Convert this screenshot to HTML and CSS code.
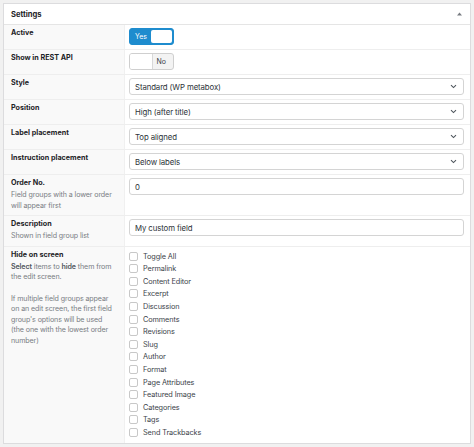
FILE: index.html
```html
<!DOCTYPE html>
<html>
<head>
<meta charset="utf-8">
<link rel="stylesheet" href="styles.css">
</head>
<body>
<div class="panel">
  <div class="panel-head">
    <span class="panel-title">Settings</span>
    <svg class="collapse" width="5" height="4" viewBox="0 0 5 4"><polygon points="2.5,0.5 5,3.5 0,3.5" fill="#787c82"/></svg>
  </div>

  <div class="row">
    <div class="label"><div class="name">Active</div></div>
    <div class="field">
      <div class="toggle on"><span class="t-text">Yes</span><span class="knob"></span></div>
    </div>
  </div>

  <div class="row">
    <div class="label"><div class="name">Show in REST API</div></div>
    <div class="field">
      <div class="toggle off"><span class="knob"></span><span class="t-text">No</span></div>
    </div>
  </div>

  <div class="row">
    <div class="label"><div class="name">Style</div></div>
    <div class="field">
      <div class="input select"><span>Standard (WP metabox)</span><svg class="chev" width="7" height="5" viewBox="0 0 7 5"><path d="M1 1.2 L3.5 3.6 L6 1.2" fill="none" stroke="#50575e" stroke-width="1.1"/></svg></div>
    </div>
  </div>

  <div class="row">
    <div class="label"><div class="name">Position</div></div>
    <div class="field">
      <div class="input select"><span>High (after title)</span><svg class="chev" width="7" height="5" viewBox="0 0 7 5"><path d="M1 1.2 L3.5 3.6 L6 1.2" fill="none" stroke="#50575e" stroke-width="1.1"/></svg></div>
    </div>
  </div>

  <div class="row">
    <div class="label"><div class="name">Label placement</div></div>
    <div class="field">
      <div class="input select"><span>Top aligned</span><svg class="chev" width="7" height="5" viewBox="0 0 7 5"><path d="M1 1.2 L3.5 3.6 L6 1.2" fill="none" stroke="#50575e" stroke-width="1.1"/></svg></div>
    </div>
  </div>

  <div class="row">
    <div class="label"><div class="name">Instruction placement</div></div>
    <div class="field">
      <div class="input select"><span>Below labels</span><svg class="chev" width="7" height="5" viewBox="0 0 7 5"><path d="M1 1.2 L3.5 3.6 L6 1.2" fill="none" stroke="#50575e" stroke-width="1.1"/></svg></div>
    </div>
  </div>

  <div class="row">
    <div class="label">
      <div class="name">Order No.</div>
      <p class="desc">Field groups with a lower order will appear first</p>
    </div>
    <div class="field">
      <div class="input"><span>0</span></div>
    </div>
  </div>

  <div class="row">
    <div class="label">
      <div class="name">Description</div>
      <p class="desc">Shown in field group list</p>
    </div>
    <div class="field">
      <div class="input"><span>My custom field</span></div>
    </div>
  </div>

  <div class="row last">
    <div class="label">
      <div class="name">Hide on screen</div>
      <p class="desc"><b>Select</b> items to <b>hide</b> them from the edit screen.</p>
      <p class="desc gap">If multiple field groups appear on an edit screen, the first field group's options will be used (the one with the lowest order number)</p>
    </div>
    <div class="field">
      <ul class="checks">
        <li><span class="box"></span>Toggle All</li>
        <li><span class="box"></span>Permalink</li>
        <li><span class="box"></span>Content Editor</li>
        <li><span class="box"></span>Excerpt</li>
        <li><span class="box"></span>Discussion</li>
        <li><span class="box"></span>Comments</li>
        <li><span class="box"></span>Revisions</li>
        <li><span class="box"></span>Slug</li>
        <li><span class="box"></span>Author</li>
        <li><span class="box"></span>Format</li>
        <li><span class="box"></span>Page Attributes</li>
        <li><span class="box"></span>Featured Image</li>
        <li><span class="box"></span>Categories</li>
        <li><span class="box"></span>Tags</li>
        <li><span class="box"></span>Send Trackbacks</li>
      </ul>
    </div>
  </div>
</div>
</body>
</html>
```

FILE: styles.css
```css
html, body {
  margin: 0;
  padding: 0;
}
body {
  background: #f1f1f1;
  font-family: Inter, "Noto Sans", "Liberation Sans", sans-serif;
  color: #1d2327;
  padding-top: 3px;
}
.panel {
  margin: 0 3px 0 3px;
  border: 1px solid #dcdcde;
  background: #fff;
}
.panel-head {
  height: 20px;
  border-bottom: 1px solid #e5e5e5;
  display: flex;
  align-items: center;
  justify-content: space-between;
  padding: 0 8px 0 7px;
}
.panel-title {
  font-size: 7.6px;
  font-weight: 700;
  color: #1d2327;
}
.collapse {
  display: block;
}
.row {
  display: grid;
  grid-template-columns: 121px 1fr;
  border-bottom: 1px solid #eeeeee;
}
.row.last {
  border-bottom: none;
}
.label {
  background: #f9f9f9;
  border-right: 1px solid #f0f0f0;
  padding: 2px 9px 4px 7px;
}
.name {
  font-size: 7.2px;
  font-weight: 700;
  line-height: 12px;
  color: #1d2327;
}
.desc {
  margin: 1px 0 0 0;
  font-size: 7.1px;
  letter-spacing: -0.1px;
  line-height: 10.6px;
  color: #787c82;
}
.desc b {
  font-weight: 600;
  color: #50575e;
}
.desc.gap {
  margin-top: 10.6px;
}
.field {
  padding: 3px 6px 4px 4px;
}
.toggle {
  width: 45px;
  height: 17px;
  box-sizing: border-box;
  border-radius: 3px;
  display: flex;
  align-items: center;
  font-size: 7px;
}
.toggle.on {
  background: #1e8cce;
  border: 1px solid #1e8cce;
  justify-content: space-between;
  padding: 1px;
}
.toggle.on .t-text {
  color: #fff;
  padding-left: 4px;
}
.toggle.on .knob {
  width: 21px;
  height: 13px;
  background: #fff;
  border-radius: 2px;
}
.toggle.off {
  background: #f3f3f3;
  border: 1px solid #cfcfcf;
  justify-content: space-between;
}
.toggle.off .knob {
  width: 22px;
  height: 15px;
  background: #fff;
  border-right: 1px solid #d8d8d8;
  border-radius: 2px 0 0 2px;
}
.toggle.off .t-text {
  color: #3c434a;
  padding-right: 7px;
}
.input {
  height: 17px;
  box-sizing: border-box;
  border: 1px solid #d4d4d4;
  border-radius: 3px;
  background: #fff;
  display: flex;
  align-items: center;
  justify-content: space-between;
  padding: 0 6px 0 5px;
  font-size: 7.8px;
  letter-spacing: -0.1px;
  color: #2c3338;
}
.chev {
  display: block;
}
.checks {
  list-style: none;
  margin: 0;
  padding: 0;
}
.checks li {
  display: flex;
  align-items: center;
  height: 12.6px;
  font-size: 7.3px;
  letter-spacing: -0.1px;
  color: #3c434a;
}
.box {
  width: 9px;
  height: 9px;
  box-sizing: border-box;
  border: 1px solid #c8c8c8;
  border-radius: 2px;
  background: #fff;
  margin-right: 5px;
  flex: none;
}
```
